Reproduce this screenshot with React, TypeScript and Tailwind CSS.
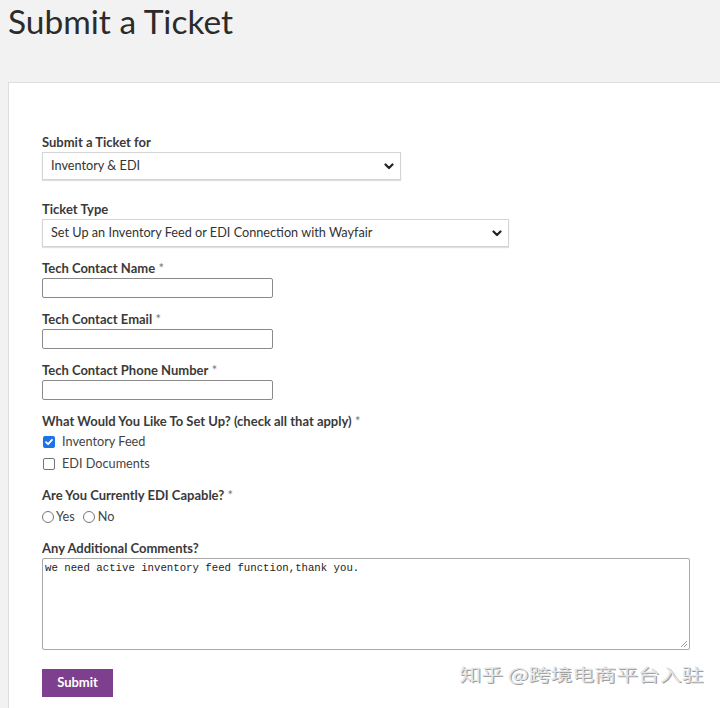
import React from "react";

const font = { fontFamily: "Lato, 'Open Sans', Arial, sans-serif" };

function Chevron() {
  return (
    <svg width="10" height="7" viewBox="0 0 10 7" className="shrink-0">
      <path d="M1.5 1.5 L5 5 L8.5 1.5" fill="none" stroke="#222" strokeWidth="2.2" strokeLinecap="round" strokeLinejoin="round" />
    </svg>
  );
}

function Label({ children, req, className = "" }: { children: React.ReactNode; req?: boolean; className?: string }) {
  return (
    <div className={"h-[16px] leading-[16px] text-[13px] font-bold text-[#3a3a3a] " + className}>
      {children}
      {req && <span className="font-normal text-[#777]"> *</span>}
    </div>
  );
}

function Select({ value, w, className = "" }: { value: string; w: string; className?: string }) {
  return (
    <div
      className={
        "h-[28px] flex items-center justify-between pl-[8px] pr-[6px] bg-white border border-[#d4d4d4] shadow-[0_1px_1px_rgba(0,0,0,0.12)] text-[12.7px] text-[#333] " +
        w +
        " " +
        className
      }
    >
      <span>{value}</span>
      <Chevron />
    </div>
  );
}

function Input({ className = "" }: { className?: string }) {
  return <div className={"w-[231px] h-[20px] bg-white border border-[#8a8a8a] rounded-[2px] " + className} />;
}

export default function App() {
  return (
    <div className="relative w-[720px] h-[708px] overflow-hidden bg-[#f2f2f2]" style={font}>
      <div className="h-[82px] pl-[8px] pt-[2px]">
        <h1 className="text-[33.5px] leading-[38px] text-[#2b2b2b] font-normal">Submit a Ticket</h1>
      </div>
      <div className="ml-[8px] h-[626px] bg-white border-t border-l border-[#dedede] pl-[33px] pt-[51px]">
        <Label>Submit a Ticket for</Label>
        <Select value="Inventory & EDI" w="w-[359px]" className="mt-[2px]" />

        <Label className="mt-[21px]">Ticket Type</Label>
        <Select value="Set Up an Inventory Feed or EDI Connection with Wayfair" w="w-[467px]" className="mt-[2px]" />

        <Label className="mt-[13px]" req>Tech Contact Name</Label>
        <Input className="mt-[2px]" />

        <Label className="mt-[13px]" req>Tech Contact Email</Label>
        <Input className="mt-[2px]" />

        <Label className="mt-[13px]" req>Tech Contact Phone Number</Label>
        <Input className="mt-[2px]" />

        <Label className="mt-[13px]" req>What Would You Like To Set Up? (check all that apply)</Label>
        <div className="mt-[2px] h-[22px] flex items-center text-[12.7px] text-[#444]">
          <span className="ml-[1px] w-[12px] h-[12px] rounded-[2px] bg-[#1a73e8] flex items-center justify-center">
            <svg width="10" height="10" viewBox="0 0 10 10">
              <path d="M2 5.2 L4.1 7.2 L8 2.8" fill="none" stroke="white" strokeWidth="1.8" strokeLinecap="round" strokeLinejoin="round" />
            </svg>
          </span>
          <span className="ml-[7px]">Inventory Feed</span>
        </div>
        <div className="h-[22px] flex items-center text-[12.7px] text-[#444]">
          <span className="ml-[1px] w-[12px] h-[12px] rounded-[2px] border border-[#767676] bg-white" />
          <span className="ml-[7px]">EDI Documents</span>
        </div>

        <Label className="mt-[12px]" req>Are You Currently EDI Capable?</Label>
        <div className="mt-[3px] h-[22px] flex items-center text-[12.7px] text-[#444]">
          <span className="w-[12px] h-[12px] rounded-full border border-[#767676] bg-white" />
          <span className="ml-[2px]">Yes</span>
          <span className="ml-[8px] w-[12px] h-[12px] rounded-full border border-[#767676] bg-white" />
          <span className="ml-[3px]">No</span>
        </div>

        <Label className="mt-[12px]">Any Additional Comments?</Label>
        <div className="relative mt-[2px] w-[648px] h-[92px] bg-white border border-[#a9a9a9] rounded-[2px] px-[2px] pt-[2px]">
          <div className="text-[10.7px] leading-[14px] text-[#222]" style={{ fontFamily: "'Liberation Mono', 'Courier New', monospace" }}>
            we need active inventory feed function,thank you.
          </div>
          <svg width="9" height="9" viewBox="0 0 9 9" className="absolute right-[1px] bottom-[1px]">
            <path d="M8 2 L2 8 M8 5 L5 8" stroke="#999" strokeWidth="1" />
          </svg>
        </div>

        <button className="mt-[19px] w-[71px] h-[28px] bg-[#7e3f8e] text-white text-[13px] font-bold">Submit</button>
      </div>
      <div
        className="absolute top-[664px] right-[17px] origin-right scale-x-125 text-[17.5px] leading-[20px] text-[#e4e4e4] whitespace-nowrap"
        style={{ fontFamily: "'Noto Sans CJK SC', sans-serif", textShadow: "1px 1px 0 #a0a0a0" }}
      >
        知乎 @跨境电商平台入驻
      </div>
    </div>
  );
}
